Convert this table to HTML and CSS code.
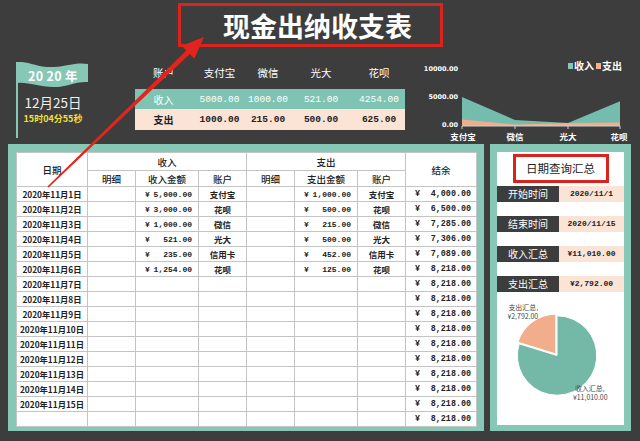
FILE: index.html
```html
<!DOCTYPE html>
<html lang="zh-CN">
<head>
<meta charset="utf-8">
<title>现金出纳收支表</title>
<link rel="stylesheet" href="styles.css">
</head>
<body>
<div class="page">
  <header class="title-row">
    <h1 class="title-box"><span>现金出纳收支表</span></h1>
  </header>

  <section class="top-row">
    <div class="date-block">
      <div class="flag">
        <svg class="flag-bg" width="70" height="27" viewBox="0 0 70 27"><path d="M0,0 C10,-1 20,6 36,5 C50,4 58,0 70,2 L70,20 C58,19 50,25 36,25 C20,25 10,20 0,21 Z" fill="#86c7b6"/></svg>
        <span class="flag-text">20 20 年</span>
      </div>
      <div class="date">12月25日</div>
      <div class="time">15时04分55秒</div>
    </div>

    <div class="mini">
      <div class="mini-row mini-head"><span>账户</span><span>支付宝</span><span>微信</span><span>光大</span><span>花呗</span></div>
      <div class="mini-row mini-in"><span class="cn">收入</span><span>5000.00</span><span>1000.00</span><span>521.00</span><span>4254.00</span></div>
      <div class="mini-row mini-out"><span class="cn">支出</span><span>1000.00</span><span>215.00</span><span>500.00</span><span>625.00</span></div>
    </div>

    <svg class="chart" width="220" height="88" viewBox="0 0 220 88">
      <text class="ylab" x="38" y="16">10000.00</text>
      <text class="ylab" x="38" y="44">5000.00</text>
      <text class="ylab" x="38" y="72">0.00</text>
      <path d="M42,71 L42,42 L95,65 L148,68 L200,46.3 L200,71 Z" fill="#74bcad"/>
      <path d="M42,71 L42,64.5 L95,69.5 L148,68 L200,67.4 L200,71 Z" fill="#eeae8e"/>
      <path d="M42,71 H200 M42,71 V74 M95,71 V74 M148,71 V74 M200,71 V74" stroke="#cfcfcf" stroke-width="1" fill="none"/>
      <text class="xlab" x="43" y="85">支付宝</text>
      <text class="xlab" x="95" y="85">微信</text>
      <text class="xlab" x="148" y="85">光大</text>
      <text class="xlab" x="199" y="85">花呗</text>
      <rect x="148" y="8" width="5" height="6" fill="#86c7b6"/>
      <text class="legend" x="154" y="15">收入</text>
      <rect x="176" y="8" width="5" height="6" fill="#f2b08f"/>
      <text class="legend" x="182" y="15">支出</text>
    </svg>
  </section>

  <section class="bottom-row">
    <div class="ledger-panel">
      <table class="ledger">
        <colgroup>
          <col class="c-date"><col class="c-note"><col class="c-amt"><col class="c-acc">
          <col class="c-note"><col class="c-amt"><col class="c-acc"><col class="c-date">
        </colgroup>
        <thead>
          <tr class="h1"><th rowspan="2">日期</th><th colspan="3">收入</th><th colspan="3">支出</th><th rowspan="2">结余</th></tr>
          <tr class="h2"><th>明细</th><th>收入金额</th><th>账户</th><th>明细</th><th>支出金额</th><th>账户</th></tr>
        </thead>
        <tbody>
          <tr><td class="d">2020年11月1日</td><td></td><td><div class="amt"><span>¥</span><span>5,000.00</span></div></td><td class="acc">支付宝</td><td></td><td><div class="amt"><span>¥</span><span>1,000.00</span></div></td><td class="acc">支付宝</td><td><div class="amt bal"><span>¥</span><span>4,000.00</span></div></td></tr>
          <tr><td class="d">2020年11月2日</td><td></td><td><div class="amt"><span>¥</span><span>3,000.00</span></div></td><td class="acc">花呗</td><td></td><td><div class="amt"><span>¥</span><span>500.00</span></div></td><td class="acc">花呗</td><td><div class="amt bal"><span>¥</span><span>6,500.00</span></div></td></tr>
          <tr><td class="d">2020年11月3日</td><td></td><td><div class="amt"><span>¥</span><span>1,000.00</span></div></td><td class="acc">微信</td><td></td><td><div class="amt"><span>¥</span><span>215.00</span></div></td><td class="acc">微信</td><td><div class="amt bal"><span>¥</span><span>7,285.00</span></div></td></tr>
          <tr><td class="d">2020年11月4日</td><td></td><td><div class="amt"><span>¥</span><span>521.00</span></div></td><td class="acc">光大</td><td></td><td><div class="amt"><span>¥</span><span>500.00</span></div></td><td class="acc">光大</td><td><div class="amt bal"><span>¥</span><span>7,306.00</span></div></td></tr>
          <tr><td class="d">2020年11月5日</td><td></td><td><div class="amt"><span>¥</span><span>235.00</span></div></td><td class="acc">信用卡</td><td></td><td><div class="amt"><span>¥</span><span>452.00</span></div></td><td class="acc">信用卡</td><td><div class="amt bal"><span>¥</span><span>7,089.00</span></div></td></tr>
          <tr><td class="d">2020年11月6日</td><td></td><td><div class="amt"><span>¥</span><span>1,254.00</span></div></td><td class="acc">花呗</td><td></td><td><div class="amt"><span>¥</span><span>125.00</span></div></td><td class="acc">花呗</td><td><div class="amt bal"><span>¥</span><span>8,218.00</span></div></td></tr>
          <tr><td class="d">2020年11月7日</td><td></td><td></td><td></td><td></td><td></td><td></td><td><div class="amt bal"><span>¥</span><span>8,218.00</span></div></td></tr>
          <tr><td class="d">2020年11月8日</td><td></td><td></td><td></td><td></td><td></td><td></td><td><div class="amt bal"><span>¥</span><span>8,218.00</span></div></td></tr>
          <tr><td class="d">2020年11月9日</td><td></td><td></td><td></td><td></td><td></td><td></td><td><div class="amt bal"><span>¥</span><span>8,218.00</span></div></td></tr>
          <tr><td class="d">2020年11月10日</td><td></td><td></td><td></td><td></td><td></td><td></td><td><div class="amt bal"><span>¥</span><span>8,218.00</span></div></td></tr>
          <tr><td class="d">2020年11月11日</td><td></td><td></td><td></td><td></td><td></td><td></td><td><div class="amt bal"><span>¥</span><span>8,218.00</span></div></td></tr>
          <tr><td class="d">2020年11月12日</td><td></td><td></td><td></td><td></td><td></td><td></td><td><div class="amt bal"><span>¥</span><span>8,218.00</span></div></td></tr>
          <tr><td class="d">2020年11月13日</td><td></td><td></td><td></td><td></td><td></td><td></td><td><div class="amt bal"><span>¥</span><span>8,218.00</span></div></td></tr>
          <tr><td class="d">2020年11月14日</td><td></td><td></td><td></td><td></td><td></td><td></td><td><div class="amt bal"><span>¥</span><span>8,218.00</span></div></td></tr>
          <tr><td class="d">2020年11月15日</td><td></td><td></td><td></td><td></td><td></td><td></td><td><div class="amt bal"><span>¥</span><span>8,218.00</span></div></td></tr>
          <tr><td class="d"></td><td></td><td></td><td></td><td></td><td></td><td></td><td><div class="amt bal"><span>¥</span><span>8,218.00</span></div></td></tr>
        </tbody>
      </table>
    </div>

    <div class="summary-panel">
      <div class="summary">
        <div class="sum-title">日期查询汇总</div>
        <div class="sum-row"><span class="sum-label">开始时间</span><span class="sum-val">2020/11/1</span></div>
        <div class="sum-row"><span class="sum-label">结束时间</span><span class="sum-val">2020/11/15</span></div>
        <div class="sum-row"><span class="sum-label">收入汇总</span><span class="sum-val">¥11,010.00</span></div>
        <div class="sum-row"><span class="sum-label">支出汇总</span><span class="sum-val">¥2,792.00</span></div>
        <svg class="pie" width="127" height="134" viewBox="0 0 127 134">
          <path d="M60,64 L60,24 A40,40 0 1,1 21.8,52.2 Z" fill="#74b9a8" stroke="#fff" stroke-width="1"/>
          <path d="M58.8,62.4 L20.6,50.6 A40,40 0 0,1 58.8,22.4 Z" fill="#f2ae8c" stroke="#fff" stroke-width="1"/>
          <text class="pie-lab" x="11" y="18">支出汇总,</text>
          <text class="pie-lab" x="10" y="27">¥2,792.00</text>
          <text class="pie-lab" x="78" y="100">收入汇总,</text>
          <text class="pie-lab" x="76" y="109">¥11,010.00</text>
        </svg>
      </div>
    </div>
  </section>

  <svg class="arrow" width="640" height="441" viewBox="0 0 640 441">
    <polygon points="204,37 194.3,58.7 189.8,54 48.6,187.6 47.4,186.4 186.4,50.4 181.9,45.7" fill="#e3241c"/>
  </svg>
</div>
</body>
</html>
```

FILE: styles.css
```css
* { box-sizing: border-box; margin: 0; padding: 0; }
html, body { width: 640px; height: 441px; overflow: hidden; }
body {
  background: #3d3d3d;
  font-family: "Noto Sans CJK SC", "Noto Sans", sans-serif;
  color: #222;
}
.page { position: relative; width: 640px; height: 441px; }

/* title */
.title-row { height: 50px; padding-top: 3px; }
.title-box {
  margin-left: 178px;
  width: 265px;
  height: 44px;
  border: 3px solid #d8241c;
  display: flex;
  align-items: center;
  justify-content: center;
  padding-left: 14px;
  color: #fff;
  font-size: 27px;
  font-weight: 700;
  line-height: 1;
}

/* top row */
.top-row { display: flex; height: 94px; }
.date-block {
  margin-left: 16px;
  margin-top: 12px;
  width: 72px;
  height: 76px;
  border-left: 2px solid #86c7b6;
  display: flex;
  flex-direction: column;
  align-items: center;
}
.flag { display: grid; width: 70px; height: 27px; }
.flag > * { grid-area: 1 / 1; }
.flag-text {
  color: #fff;
  font-weight: 700;
  font-size: 12.5px;
  line-height: 27px;
  text-align: center;
  padding-bottom: 2px;
  letter-spacing: 0.3px;
}
.date {
  margin-top: 4px;
  font-size: 13.5px;
  line-height: 18px;
  color: #f0f0f0;
}
.time {
  margin-top: 2px;
  font-size: 9px;
  line-height: 12px;
  font-weight: 700;
  color: #f2e03a;
}

.mini { margin-left: 47px; margin-top: 11px; width: 270px; }
.mini-row {
  display: grid;
  grid-template-columns: 57px 55px 42px 64px 52px;
  align-items: center;
  text-align: center;
}
.mini-head { height: 23px; color: #fff; font-size: 10.5px; }
.mini-in {
  margin-top: 5px;
  height: 20px;
  background: #7fc4b2;
  color: #fff;
  font-family: "Liberation Mono", "Noto Sans CJK SC", monospace;
  font-size: 9.5px;
}
.mini-out {
  height: 21px;
  background: #fbe3d6;
  color: #222;
  font-family: "Liberation Mono", "Noto Sans CJK SC", monospace;
  font-size: 9.5px;
  font-weight: 700;
}
.mini-row .cn { font-family: "Noto Sans CJK SC", sans-serif; font-size: 10px; }

.chart { margin-left: 15px; margin-top: 5px; display: block; }
.ylab { font-family: "DejaVu Sans", sans-serif; font-size: 6.5px; font-weight: 700; fill: #fff; text-anchor: end; }
.xlab { font-size: 8.5px; font-weight: 700; fill: #fff; text-anchor: middle; }
.legend { font-size: 10px; font-weight: 700; fill: #fff; }

/* bottom row */
.bottom-row { display: flex; height: 287px; }
.ledger-panel {
  margin-left: 8px;
  width: 476px;
  background: #86c7b6;
  padding: 8px 8px 5px 8px;
}
.ledger {
  width: 460px;
  table-layout: fixed;
  border-collapse: collapse;
  background: #fff;
}
.c-date { width: 71px; }
.c-note { width: 48px; }
.c-amt { width: 63px; }
.c-acc { width: 48px; }
.ledger th, .ledger td {
  border: 1px solid #c4c4c4;
  padding: 0;
  text-align: center;
  vertical-align: middle;
  overflow: hidden;
  white-space: nowrap;
}
.ledger th { font-size: 9.5px; font-weight: 500; color: #222; }
.ledger tr.h1 { height: 18px; }
.ledger tr.h2 { height: 16px; }
.ledger tbody tr { height: 15px; }
.ledger td { font-size: 8.3px; font-weight: 700; line-height: 13px; }
.ledger td.acc { font-size: 8.5px; }
.amt {
  display: flex;
  justify-content: space-between;
  padding: 0 6px 0 9px;
  font-family: "Liberation Mono", "Noto Sans CJK SC", monospace;
  font-size: 8px;
  font-weight: 700;
}
.amt.bal { padding: 0 5px 0 9px; font-size: 8.4px; }

.summary-panel {
  margin-left: 6px;
  width: 141px;
  background: #86c7b6;
  padding: 8px 7px 6px 7px;
}
.summary {
  height: 100%;
  background: #fff;
  display: flex;
  flex-direction: column;
}
.sum-title {
  margin: 2px auto 0;
  width: 96px;
  height: 29px;
  border: 3px solid #d8241c;
  font-size: 11.5px;
  line-height: 23px;
  text-align: center;
  color: #222;
}
.sum-row { display: flex; height: 16px; margin-top: 14px; }
.sum-title + .sum-row { margin-top: 3px; }
.sum-label {
  width: 62px;
  background: #3d3d3d;
  color: #fff;
  font-size: 10px;
  line-height: 16px;
  text-align: center;
}
.sum-val {
  flex: 1;
  background: #fbe3d6;
  font-family: "Liberation Mono", "Noto Sans CJK SC", monospace;
  font-size: 8px;
  font-weight: 700;
  line-height: 16px;
  text-align: center;
}
.pie { display: block; }
.pie-lab { font-size: 7px; fill: #444; }

.arrow { position: absolute; left: 0; top: 0; pointer-events: none; }
```
